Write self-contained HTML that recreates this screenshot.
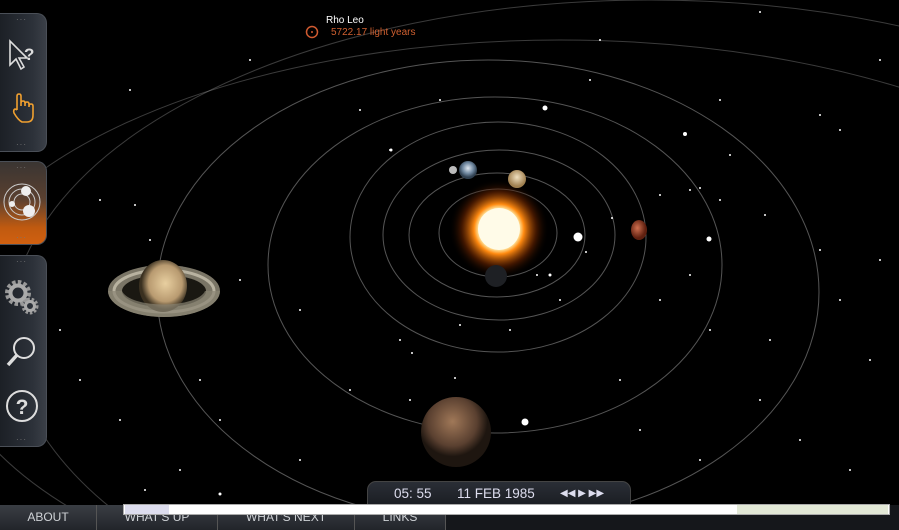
<!DOCTYPE html>
<html><head><meta charset="utf-8"><style>
html,body{margin:0;width:899px;height:530px;overflow:hidden}
body{background:#000;position:relative;font-family:"Liberation Sans",sans-serif}
.panel{position:absolute;left:0;width:47px;border-radius:0 10px 10px 0;background:linear-gradient(90deg,#1c2026,#2c3139 70%,#3a3f47);border:1px solid #4a4f57;border-left:none;box-sizing:border-box;overflow:hidden}
.dots{position:absolute;left:16px;color:#777;font-size:8px;letter-spacing:1px;line-height:8px}
.tab{position:absolute;top:505px;height:25px;color:#cfd2d6;font-size:12px;text-align:center;line-height:24px;background:linear-gradient(#3a3e44,#22252a);border-right:1px solid #555;overflow:hidden}
</style></head><body>
<svg width="899" height="530" style="position:absolute;left:0;top:0">
<defs>
<radialGradient id="glow"><stop offset="0" stop-color="#fff"/><stop offset=".4" stop-color="#fff0b0"/><stop offset=".5" stop-color="#ff8a10"/><stop offset=".75" stop-color="#6a2400" stop-opacity=".6"/><stop offset="1" stop-color="#000" stop-opacity="0"/></radialGradient>
<radialGradient id="jup" cx=".45" cy=".35"><stop offset="0" stop-color="#a07858"/><stop offset=".7" stop-color="#5a4030"/><stop offset="1" stop-color="#1e1610"/></radialGradient>
<radialGradient id="sat" cx=".55" cy=".45"><stop offset="0" stop-color="#e8cfa0"/><stop offset=".7" stop-color="#b89a70"/><stop offset="1" stop-color="#3a3020"/></radialGradient>
<radialGradient id="mars" cx=".4" cy=".4"><stop offset="0" stop-color="#d07050"/><stop offset="1" stop-color="#602010"/></radialGradient>
<radialGradient id="ven" cx=".5" cy=".4"><stop offset="0" stop-color="#f0e0c0"/><stop offset="1" stop-color="#a08050"/></radialGradient>
<radialGradient id="ear" cx=".5" cy=".4"><stop offset="0" stop-color="#e0e8f0"/><stop offset=".6" stop-color="#7088a0"/><stop offset="1" stop-color="#304050"/></radialGradient>
</defs>
<g fill="none" stroke="#aaa" stroke-opacity=".5" stroke-width="1">
<ellipse cx="498" cy="233" rx="59" ry="44"/>
<ellipse cx="497" cy="235" rx="88" ry="62"/>
<ellipse cx="499" cy="235" rx="116" ry="85"/>
<ellipse cx="498" cy="237" rx="148" ry="115"/>
<ellipse cx="495" cy="265" rx="227" ry="168"/>
<ellipse cx="488" cy="292" rx="331" ry="232"/>
</g>
<g fill="none" stroke="#aaa" stroke-opacity=".35" stroke-width="1">
<ellipse cx="560" cy="330" rx="620" ry="290"/>
<ellipse cx="650" cy="330" rx="640" ry="330"/>
</g>
<g fill="#fff">
<circle cx="545" cy="108" r="2.5"/><circle cx="685" cy="134" r="2"/><circle cx="709" cy="239" r="2.5"/><circle cx="578" cy="237" r="4.5"/><circle cx="525" cy="422" r="3.5"/>
<circle cx="760" cy="12" r="1"/><circle cx="600" cy="40" r="1"/><circle cx="250" cy="60" r="1"/><circle cx="130" cy="90" r="1"/><circle cx="820" cy="115" r="1"/><circle cx="840" cy="130" r="1"/><circle cx="390" cy="150" r="1"/><circle cx="730" cy="155" r="1"/><circle cx="100" cy="200" r="1"/><circle cx="135" cy="205" r="1"/><circle cx="690" cy="190" r="1"/><circle cx="700" cy="188" r="1"/><circle cx="720" cy="200" r="1"/><circle cx="660" cy="195" r="1"/><circle cx="765" cy="215" r="1"/><circle cx="150" cy="240" r="1"/><circle cx="820" cy="250" r="1"/><circle cx="880" cy="260" r="1"/><circle cx="240" cy="280" r="1"/><circle cx="300" cy="310" r="1"/><circle cx="660" cy="300" r="1"/><circle cx="710" cy="330" r="1"/><circle cx="770" cy="340" r="1"/><circle cx="460" cy="325" r="1"/><circle cx="510" cy="330" r="1"/><circle cx="560" cy="300" r="1"/><circle cx="400" cy="340" r="1"/><circle cx="200" cy="380" r="1"/><circle cx="350" cy="390" r="1"/><circle cx="620" cy="380" r="1"/><circle cx="760" cy="400" r="1"/><circle cx="120" cy="420" r="1"/><circle cx="220" cy="420" r="1"/><circle cx="410" cy="400" r="1"/><circle cx="640" cy="430" r="1"/><circle cx="800" cy="440" r="1"/><circle cx="180" cy="470" r="1"/><circle cx="300" cy="460" r="1"/><circle cx="700" cy="460" r="1"/><circle cx="850" cy="470" r="1"/><circle cx="220" cy="494" r="1.5"/><circle cx="145" cy="490" r="1"/><circle cx="880" cy="60" r="1"/><circle cx="360" cy="110" r="1"/><circle cx="440" cy="100" r="1"/><circle cx="590" cy="80" r="1"/><circle cx="720" cy="100" r="1"/><circle cx="60" cy="330" r="1"/><circle cx="80" cy="380" r="1"/><circle cx="870" cy="360" r="1"/><circle cx="840" cy="300" r="1"/><circle cx="550" cy="275" r="1.5"/><circle cx="537" cy="275" r="1"/><circle cx="586" cy="252" r="1"/><circle cx="455" cy="378" r="1"/><circle cx="412" cy="353" r="1"/><circle cx="391" cy="150" r="1.5"/><circle cx="612" cy="218" r="1"/><circle cx="690" cy="275" r="1"/>
</g>
<circle cx="499" cy="229" r="50" fill="url(#glow)"/>
<circle cx="499" cy="229" r="21" fill="#fffbe8"/>
<circle cx="496" cy="276" r="11" fill="#1e2024"/>
<circle cx="453" cy="170" r="4" fill="#bbb"/>
<circle cx="468" cy="170" r="9" fill="url(#ear)"/>
<circle cx="517" cy="179" r="9" fill="url(#ven)"/>
<ellipse cx="639" cy="230" rx="8" ry="10" fill="url(#mars)"/>
<circle cx="456" cy="432" r="35" fill="url(#jup)"/>
<ellipse cx="164" cy="291" rx="56" ry="26" fill="#7a7566"/>
<ellipse cx="164" cy="291" rx="50" ry="21" fill="none" stroke="#b8b2a0" stroke-width="3"/>
<ellipse cx="164" cy="291" rx="42" ry="16" fill="#1a1812"/>
<ellipse cx="163" cy="286" rx="24" ry="26" fill="url(#sat)"/>
<path d="M108 291 A56 26 0 0 0 220 291 L205 291 A42 16 0 0 1 122 291 Z" fill="#8a8474" opacity=".7"/>
<circle cx="312" cy="32" r="5.5" fill="none" stroke="#d05a30" stroke-width="1.5"/><circle cx="312" cy="32" r="1" fill="#d05a30"/>
</svg>
<div style="position:absolute;left:326px;top:15px;color:#fff;font-size:10px">Rho Leo</div>
<div style="position:absolute;left:331px;top:27px;color:#d06030;font-size:10px">5722.17 light years</div>

<div class="panel" style="top:13px;height:139px"><div class="dots" style="top:2px">···</div><div class="dots" style="bottom:2px">···</div>
<svg width="47" height="139" style="position:absolute;left:0;top:0"><path d="M10 27 L10 51 L16 45 L21 55 L24 53 L19 44 L27 44 Z" fill="none" stroke="#ddd" stroke-width="1.6"/><text x="24" y="46" fill="#ddd" font-size="17" font-weight="bold" font-family="Liberation Sans">?</text>
<path d="M17 96 L17 82 Q17 80 19 80 Q21 80 21 82 L21 92 M21 89 Q21 87 23 87 Q25 87 25 89 L25 92 M25 90 Q25 88 27 88 Q29 88 29 90 L29 93 M29 92 Q29 90 31 90 Q33 90 33 92 L33 101 Q33 108 27 108 L22 108 Q18 106 14 99 Q13 96 15 95 Q16 95 17 96" fill="none" stroke="#f0a030" stroke-width="1.6"/></svg></div>
<div class="panel" style="top:161px;height:84px;background:linear-gradient(#3a3532,#5a4030 45%,#c05a10 80%,#d06010)"><div class="dots" style="top:2px">···</div><div class="dots" style="bottom:2px">···</div>
<svg width="47" height="84" style="position:absolute;left:0;top:0"><g fill="none" stroke="#ccc" stroke-width="1"><circle cx="22" cy="40" r="18"/><circle cx="22" cy="40" r="13"/><circle cx="22" cy="40" r="8"/></g><circle cx="26" cy="29" r="5" fill="#eee"/><circle cx="12" cy="42" r="3" fill="#eee"/><circle cx="29" cy="49" r="6" fill="#eee"/></svg></div>
<div class="panel" style="top:255px;height:192px"><div class="dots" style="top:2px">···</div><div class="dots" style="bottom:2px">···</div>
<svg width="47" height="192" style="position:absolute;left:0;top:0">
<circle cx="18" cy="37" r="11" fill="none" stroke="#999" stroke-width="4" stroke-dasharray="3.5 2.2"/><circle cx="18" cy="37" r="7.5" fill="none" stroke="#aaa" stroke-width="4"/>
<circle cx="30" cy="50" r="7" fill="none" stroke="#999" stroke-width="3" stroke-dasharray="2.5 1.8"/><circle cx="30" cy="50" r="4.5" fill="none" stroke="#aaa" stroke-width="3"/>
<circle cx="24" cy="92" r="10" fill="none" stroke="#ddd" stroke-width="2"/><path d="M17 99 L8 109" stroke="#ddd" stroke-width="3.5"/>
<circle cx="22" cy="150" r="15" fill="none" stroke="#ddd" stroke-width="2"/><text x="22" y="158" text-anchor="middle" fill="#ddd" font-size="21" font-weight="bold" font-family="Liberation Sans">?</text></svg></div>

<div style="position:absolute;left:367px;top:481px;width:264px;height:26px;border-radius:9px 9px 0 0;background:linear-gradient(#2a2e36,#1a1d22);border:1px solid #444;box-sizing:border-box;color:#dde;font-size:13.5px;line-height:24px">
<span style="position:absolute;left:26px">05: 55</span><span style="position:absolute;left:89px">11 FEB 1985</span><span style="position:absolute;left:192px;font-size:10px">◀◀ ▶ ▶▶</span></div>
<div style="position:absolute;left:0;top:505px;width:899px;height:25px;background:#15171b"></div>
<div class="tab" style="left:0;width:96px">ABOUT</div>
<div class="tab" style="left:97px;width:120px">WHAT'S UP</div>
<div class="tab" style="left:218px;width:136px">WHAT'S NEXT</div>
<div class="tab" style="left:355px;width:90px">LINKS</div>
<div style="position:absolute;left:123px;top:504px;width:767px;height:11px;background:#fff;border:1px solid #aaa;box-sizing:border-box"></div>
<div style="position:absolute;left:125px;top:505px;width:44px;height:9px;background:#dde"></div>
<div style="position:absolute;left:737px;top:505px;width:151px;height:9px;background:#e2e8d6"></div>
</body></html>
